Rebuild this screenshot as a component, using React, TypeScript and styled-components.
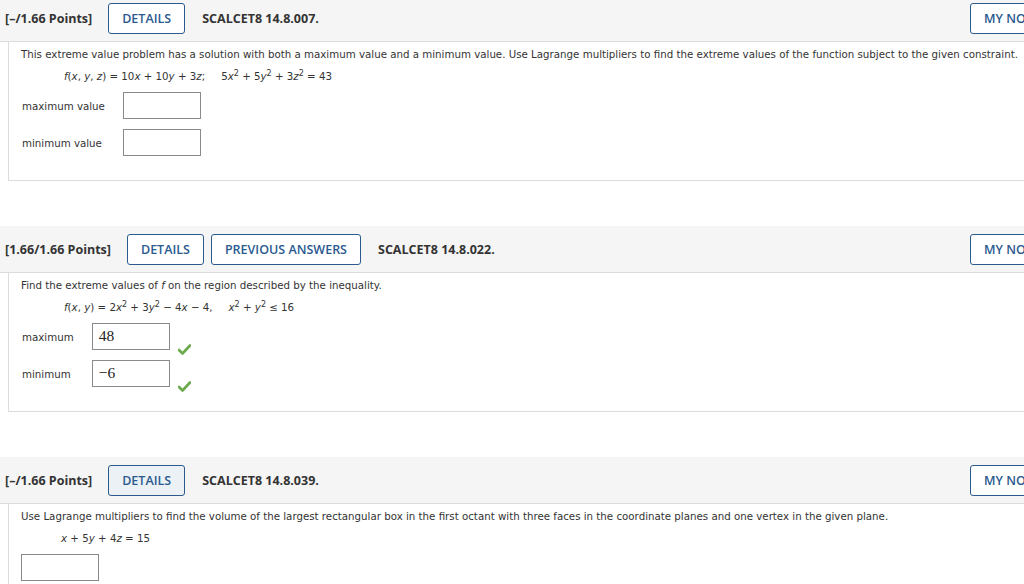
import React from "react";
import styled, { createGlobalStyle } from "styled-components";

const Global = createGlobalStyle`
  html, body { margin: 0; padding: 0; background: #fff; overflow: hidden; }
  body { font-family: "DejaVu Sans", Verdana, sans-serif; color: #333; }
`;

const Page = styled.div`
  width: 1070px;
  margin-top: -5px;
  display: flex;
  flex-direction: column;
`;

const Section = styled.section<{ $first?: boolean }>`
  display: flex;
  flex-direction: column;
  margin-top: ${(p) => (p.$first ? "0" : "45px")};
`;

const Header = styled.header`
  display: flex;
  align-items: center;
  height: 47px;
  box-sizing: border-box;
  padding: 0 5px;
  background: #f5f5f5;
  border-bottom: 1px solid #dcdcdc;
  font-family: "Open Sans", sans-serif;
`;

const Points = styled.span`
  font-weight: 700;
  font-size: 12.5px;
  color: #333;
  margin-right: 16px;
`;

const Buttons = styled.div`
  display: flex;
  gap: 7px;
`;

const Btn = styled.button<{ $active?: boolean }>`
  height: 31px;
  padding: 0 13px;
  border: 1.5px solid #2b5a8f;
  border-radius: 3px;
  background: ${(p) => (p.$active ? "#ebf1f5" : "#fff")};
  color: #2b5a8f;
  font-family: "Open Sans", sans-serif;
  font-weight: 600;
  font-size: 12.5px;
  white-space: nowrap;
`;

const Title = styled.span`
  font-weight: 700;
  font-size: 12.5px;
  color: #333;
  margin-left: 17px;
`;

const Notes = styled(Btn)`
  margin-left: auto;
  width: 95px;
  text-align: left;
`;

const Body = styled.div`
  margin-left: 8px;
  border-left: 1px solid #dcdcdc;
  border-bottom: 1px solid #dcdcdc;
  padding: 1px 0 24px 12px;
  display: flex;
  flex-direction: column;
  font-size: 10.26px;
  color: #333;
`;

const Line = styled.div`
  line-height: 22px;
  white-space: nowrap;
`;

const Formula = styled(Line)<{ $indent?: number }>`
  padding-left: ${(p) => p.$indent ?? 43}px;
`;

const Grid = styled.div`
  display: grid;
  grid-template-columns: auto auto auto;
  justify-content: start;
  column-gap: 18px;
  row-gap: 10px;
  margin-top: 5px;
  align-items: center;
`;

const Label = styled.span`
  padding-left: 1px;
`;

const Answer = styled.div`
  width: 78px;
  height: 27px;
  box-sizing: border-box;
  border: 1px solid #8a8a8a;
  background: #fff;
  font-family: "Liberation Serif", "Times New Roman", serif;
  font-size: 15.5px;
  color: #222;
  padding: 3px 0 0 6px;
`;

const Check = styled.svg`
  align-self: end;
  margin-bottom: -5px;
  margin-left: -10px;
`;

const Var = styled.i``;

const Sup = styled.sup`
  font-size: 8px;
  line-height: 0;
`;

const Gap = styled.span`
  display: inline-block;
  width: 16px;
`;

const CheckMark = () => (
  <Check width="13" height="11" viewBox="0 0 13 11">
    <path d="M1 6 L4.5 9.5 L12 1.5" fill="none" stroke="#6aaa4c" strokeWidth="2.6" strokeLinecap="round" strokeLinejoin="round" />
  </Check>
);

const Empty = styled.span``;

export default function App() {
  return (
    <>
      <Global />
      <Page>
        <Section $first>
          <Header>
            <Points>[–/1.66 Points]</Points>
            <Buttons>
              <Btn>DETAILS</Btn>
            </Buttons>
            <Title>SCALCET8 14.8.007.</Title>
            <Notes>MY NOTES</Notes>
          </Header>
          <Body>
            <Line>
              This extreme value problem has a solution with both a maximum value and a minimum value. Use Lagrange multipliers to find the extreme values of the function subject to the given constraint.
            </Line>
            <Formula>
              <Var>f</Var>(<Var>x</Var>, <Var>y</Var>, <Var>z</Var>) = 10<Var>x</Var> + 10<Var>y</Var> + 3<Var>z</Var>;<Gap />
              5<Var>x</Var><Sup>2</Sup> + 5<Var>y</Var><Sup>2</Sup> + 3<Var>z</Var><Sup>2</Sup> = 43
            </Formula>
            <Grid>
              <Label>maximum value</Label>
              <Answer />
              <Empty />
              <Label>minimum value</Label>
              <Answer />
              <Empty />
            </Grid>
          </Body>
        </Section>

        <Section>
          <Header>
            <Points>[1.66/1.66 Points]</Points>
            <Buttons>
              <Btn>DETAILS</Btn>
              <Btn>PREVIOUS ANSWERS</Btn>
            </Buttons>
            <Title>SCALCET8 14.8.022.</Title>
            <Notes>MY NOTES</Notes>
          </Header>
          <Body>
            <Line>
              Find the extreme values of <Var>f</Var> on the region described by the inequality.
            </Line>
            <Formula>
              <Var>f</Var>(<Var>x</Var>, <Var>y</Var>) = 2<Var>x</Var><Sup>2</Sup> + 3<Var>y</Var><Sup>2</Sup> − 4<Var>x</Var> − 4,<Gap />
              <Var>x</Var><Sup>2</Sup> + <Var>y</Var><Sup>2</Sup> ≤ 16
            </Formula>
            <Grid>
              <Label>maximum</Label>
              <Answer>48</Answer>
              <CheckMark />
              <Label>minimum</Label>
              <Answer>−6</Answer>
              <CheckMark />
            </Grid>
          </Body>
        </Section>

        <Section>
          <Header>
            <Points>[–/1.66 Points]</Points>
            <Buttons>
              <Btn $active>DETAILS</Btn>
            </Buttons>
            <Title>SCALCET8 14.8.039.</Title>
            <Notes>MY NOTES</Notes>
          </Header>
          <Body>
            <Line>
              Use Lagrange multipliers to find the volume of the largest rectangular box in the first octant with three faces in the coordinate planes and one vertex in the given plane.
            </Line>
            <Formula $indent={40}>
              <Var>x</Var> + 5<Var>y</Var> + 4<Var>z</Var> = 15
            </Formula>
            <Grid>
              <Answer />
            </Grid>
          </Body>
        </Section>
      </Page>
    </>
  );
}
